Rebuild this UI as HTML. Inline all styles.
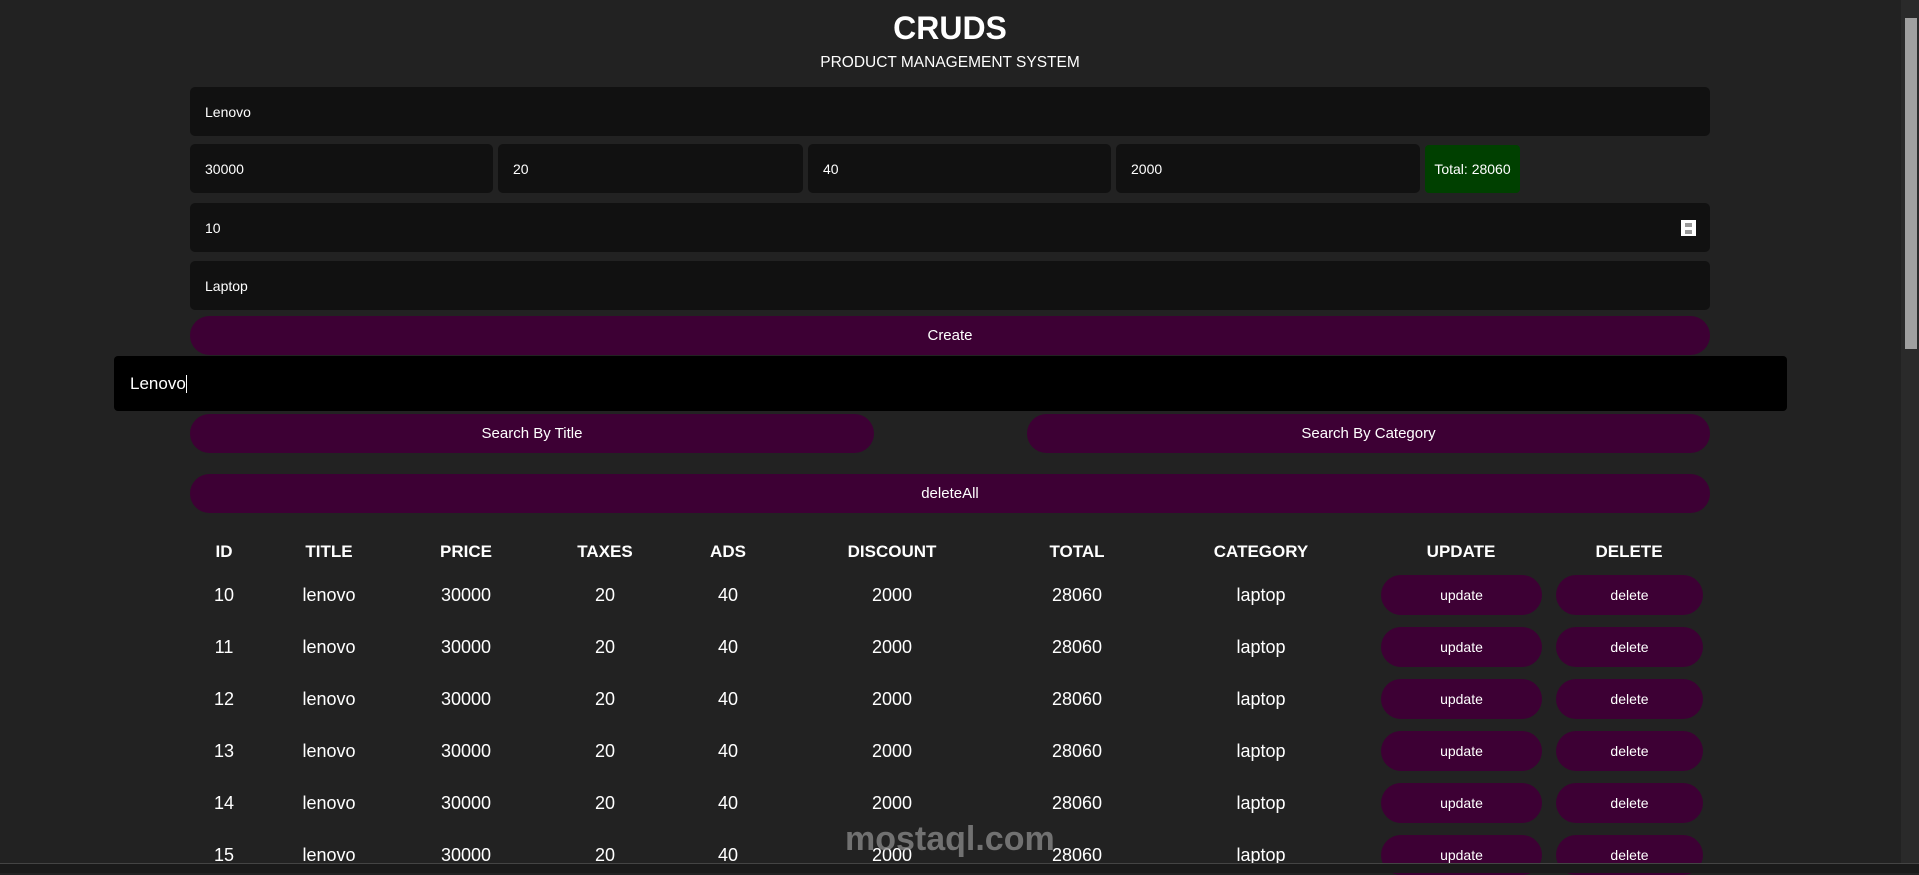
<!DOCTYPE html>
<html><head><meta charset="utf-8"><style>
*{margin:0;padding:0;box-sizing:border-box}
body{width:1919px;height:873px;background:#222;overflow:hidden;position:relative;font-family:"Liberation Sans",sans-serif;color:#fff}
.a{position:absolute}
.in{position:absolute;background:#111;border-radius:5px;font-size:14px;padding-left:15px;display:flex;align-items:center}
.btn{position:absolute;background:#3d0034;border-radius:20px;font-size:15px;display:flex;align-items:center;justify-content:center}
.c{position:absolute;transform:translateX(-50%);white-space:nowrap;font-size:18px}
.h{font-weight:bold;font-size:17px}
.ub{position:absolute;background:#3d0034;border-radius:20px;height:40px;font-size:14px;display:flex;align-items:center;justify-content:center}
</style></head><body>
<div class="a" style="left:0;width:1900px;top:10px;text-align:center;font-size:32px;font-weight:bold">CRUDS</div>
<div class="a" style="left:0;width:1900px;top:54px;text-align:center;font-size:15.5px">PRODUCT MANAGEMENT SYSTEM</div>
<div class="in" style="left:190px;top:87px;width:1520px;height:49px">Lenovo</div>
<div class="in" style="left:190px;top:144px;width:303px;height:49px">30000</div>
<div class="in" style="left:498px;top:144px;width:305px;height:49px">20</div>
<div class="in" style="left:808px;top:144px;width:303px;height:49px">40</div>
<div class="in" style="left:1116px;top:144px;width:304px;height:49px">2000</div>
<div class="a" style="left:1425px;top:145px;width:95px;height:48px;background:#004000;border-radius:4px;font-size:14px;display:flex;align-items:center;justify-content:center">Total: 28060</div>
<div class="in" style="left:190px;top:203px;width:1520px;height:49px">10</div>
<div class="a" style="left:1681px;top:220px;width:15px;height:16px;background:#fff"><div style="margin:3px 4px;height:4px;background:#999"></div><div style="margin:2px 4px;height:4px;background:#999"></div></div>
<div class="in" style="left:190px;top:261px;width:1520px;height:49px">Laptop</div>
<div class="btn" style="left:190px;top:316px;width:1520px;height:39px">Create</div>
<div class="a" style="left:114px;top:356px;width:1673px;height:55px;background:#000;border-radius:4px;font-size:17px;padding-left:16px;display:flex;align-items:center">Lenovo<span style="display:inline-block;width:1px;height:18px;background:#fff"></span></div>
<div class="btn" style="left:190px;top:414px;width:684px;height:39px">Search By Title</div>
<div class="btn" style="left:1027px;top:414px;width:683px;height:39px">Search By Category</div>
<div class="btn" style="left:190px;top:474px;width:1520px;height:39px">deleteAll</div>
<div class="c h" style="left:224px;top:542px">ID</div>
<div class="c h" style="left:329px;top:542px">TITLE</div>
<div class="c h" style="left:466px;top:542px">PRICE</div>
<div class="c h" style="left:605px;top:542px">TAXES</div>
<div class="c h" style="left:728px;top:542px">ADS</div>
<div class="c h" style="left:892px;top:542px">DISCOUNT</div>
<div class="c h" style="left:1077px;top:542px">TOTAL</div>
<div class="c h" style="left:1261px;top:542px">CATEGORY</div>
<div class="c h" style="left:1461px;top:542px">UPDATE</div>
<div class="c h" style="left:1629px;top:542px">DELETE</div>
<div id="rows"></div>
<script>
var r='',ids=[10,11,12,13,14,15];
for(var i=0;i<6;i++){var y=585+i*52;
var v=[ids[i],'lenovo','30000','20','40','2000','28060','laptop'],x=[224,329,466,605,728,892,1077,1261];
for(var j=0;j<8;j++)r+='<div class="c" style="left:'+x[j]+'px;top:'+y+'px">'+v[j]+'</div>';
r+='<div class="ub" style="left:1381px;top:'+(y-10)+'px;width:161px">update</div><div class="ub" style="left:1556px;top:'+(y-10)+'px;width:147px">delete</div>';}
document.getElementById('rows').innerHTML=r;
</script>
<div class="a" style="left:845px;top:820px;font-size:34px;color:rgba(140,140,140,.75);font-weight:bold">mostaql.com</div>
<div class="a" style="left:1901px;top:0;width:18px;height:863px;background:#2a2a2a"></div>
<div class="a" style="left:1905px;top:18px;width:12px;height:331px;background:#a0a0a0"></div>
<div class="a" style="left:0;top:863px;width:1919px;height:10px;background:#1a1a1a;border-top:1px solid #444"></div>
</body></html>
